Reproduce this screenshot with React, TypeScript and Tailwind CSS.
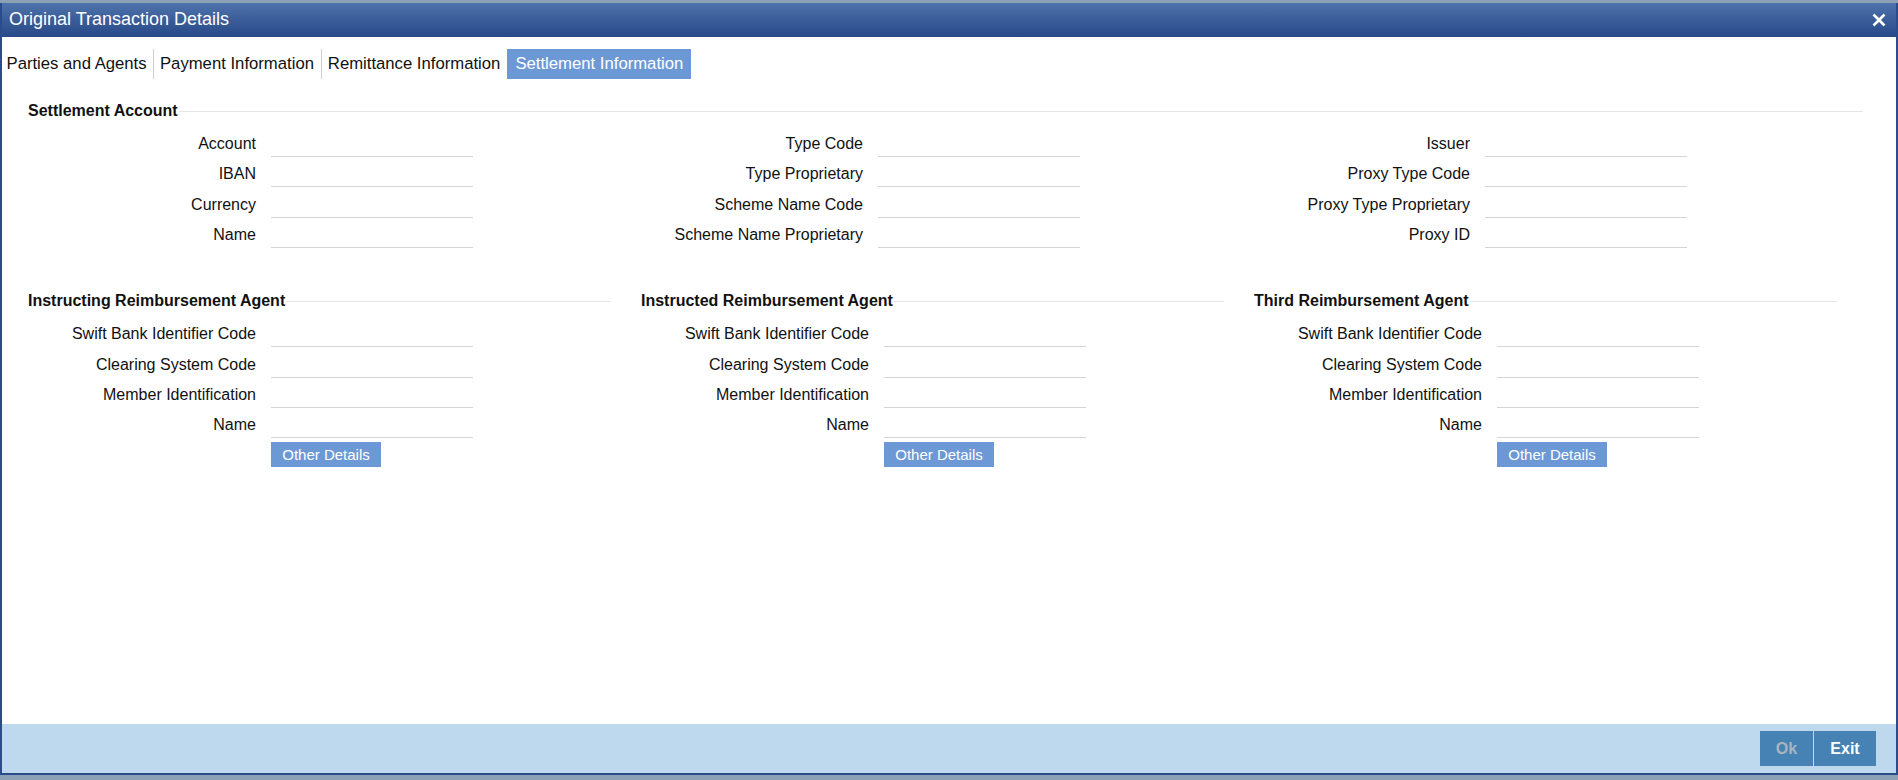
import React from "react";

const font = { fontFamily: '"Liberation Sans", Arial, sans-serif' };

function Field({ label }: { label: string }) {
  return (
    <div className="flex h-[30.3px] items-center">
      <div className="w-[228px] shrink-0 whitespace-nowrap text-right text-[16px] leading-[18px] text-[#111]">
        {label}
      </div>
      <div className="ml-[15px] h-[26px] w-[202px] shrink-0 border-b border-[#d4d4d4]" />
    </div>
  );
}

function Header({ title }: { title: string }) {
  return (
    <div className="flex h-[18px] items-center">
      <span className="whitespace-nowrap text-[16px] font-bold leading-[18px] text-[#111]">{title}</span>
      <div className="ml-[1px] h-px flex-1 bg-[#e6e6e6]" />
    </div>
  );
}

function Agent({ title }: { title: string }) {
  return (
    <div className="w-[583px] shrink-0">
      <Header title={title} />
      <div className="mt-[9px] flex flex-col">
        <Field label="Swift Bank Identifier Code" />
        <Field label="Clearing System Code" />
        <Field label="Member Identification" />
        <Field label="Name" />
      </div>
      <button className="ml-[243px] mt-[1.5px] flex h-[25px] w-[110px] items-center justify-center bg-[#6c99d5] text-[15px] leading-[17px] text-white">
        Other Details
      </button>
    </div>
  );
}

export default function App() {
  return (
    <div className="h-[780px] w-[1898px] bg-[#8ca0b6] pt-[3px]" style={font}>
      <div className="flex h-[772px] flex-col border-x-2 border-b-2 border-[#2b4c8c] bg-white">
        {/* Title bar */}
        <div className="flex h-[34px] shrink-0 items-center justify-between bg-gradient-to-b from-[#4e73ac] to-[#284887] pb-[2px] pl-[7px] pr-[10px]">
          <span className="text-[18px] leading-[20px] text-white">Original Transaction Details</span>
          <svg width="14" height="14" viewBox="0 0 14 14" className="mt-[2px]">
            <path d="M1.5 1.5 L12.5 12.5 M12.5 1.5 L1.5 12.5" stroke="white" strokeWidth="2.6" />
          </svg>
        </div>

        {/* Body */}
        <div className="flex-1 bg-white">
          {/* Tabs */}
          <div className="mt-[12px] flex h-[30px] items-stretch text-[16.7px] leading-[20px] text-[#111]">
            <div className="flex items-center border-r border-[#cfcfcf] pl-[4.5px] pr-[6.7px]">Parties and Agents</div>
            <div className="flex items-center border-r border-[#cfcfcf] pl-[5.7px] pr-[6.9px]">Payment Information</div>
            <div className="flex items-center pl-[6px] pr-[6.4px]">Remittance Information</div>
            <div className="flex items-center bg-[#6c99d5] pl-[8.7px] pr-[7.3px] text-white">Settlement Information</div>
          </div>

          <div className="pl-[26px]">
            {/* Settlement Account */}
            <div className="mt-[23px] w-[1835px]">
              <Header title="Settlement Account" />
              <div className="mt-[9px] grid grid-cols-[607px_607px_607px]">
                <div className="flex flex-col">
                  <Field label="Account" />
                  <Field label="IBAN" />
                  <Field label="Currency" />
                  <Field label="Name" />
                </div>
                <div className="flex flex-col">
                  <Field label="Type Code" />
                  <Field label="Type Proprietary" />
                  <Field label="Scheme Name Code" />
                  <Field label="Scheme Name Proprietary" />
                </div>
                <div className="flex flex-col">
                  <Field label="Issuer" />
                  <Field label="Proxy Type Code" />
                  <Field label="Proxy Type Proprietary" />
                  <Field label="Proxy ID" />
                </div>
              </div>
            </div>

            {/* Agents */}
            <div className="mt-[42px] flex gap-[30px]">
              <Agent title="Instructing Reimbursement Agent" />
              <Agent title="Instructed Reimbursement Agent" />
              <Agent title="Third Reimbursement Agent" />
            </div>
          </div>
        </div>

        {/* Footer */}
        <div className="flex h-[49px] shrink-0 items-center justify-end gap-[1px] bg-[#bed9ed] pr-[20px]">
          <button className="h-[35px] w-[53px] bg-[#4682b4] text-[16px] font-bold text-[#aab5bf]">Ok</button>
          <button className="h-[35px] w-[62px] bg-[#4682b4] text-[16px] font-bold text-white">Exit</button>
        </div>
      </div>
    </div>
  );
}
